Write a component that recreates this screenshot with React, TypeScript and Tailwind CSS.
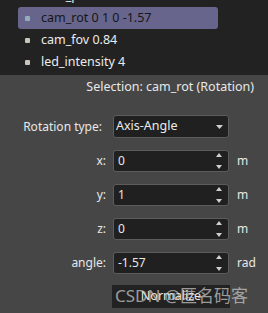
import React from 'react';

const font = { fontFamily: '"Noto Sans", "Noto Sans CJK SC", sans-serif' };

type Item = { name: string; active?: boolean };

const items: Item[] = [
  { name: 'cam_pos 0 0 5' },
  { name: 'cam_rot 0 1 0 -1.57', active: true },
  { name: 'cam_fov 0.84' },
  { name: 'led_intensity 4' },
];

function SpinBox({ value }: { value: string }) {
  return (
    <div className="relative flex h-[22px] w-[116px] items-center rounded-[3px] border border-[#5c5c5c] bg-[#202020] pl-[4px]">
      <span className="text-[12px] text-[#e8e8e8]">{value}</span>
      <div className="absolute right-[6px] top-[2px] flex h-[16px] flex-col justify-between text-[#d0d0d0]">
        <svg width="6" height="4" viewBox="0 0 6 4">
          <path d="M0 4 L3 0 L6 4 Z" fill="currentColor" />
        </svg>
        <svg width="6" height="4" viewBox="0 0 6 4">
          <path d="M0 0 L6 0 L3 4 Z" fill="currentColor" />
        </svg>
      </div>
    </div>
  );
}

function Row({ label, value, unit }: { label: string; value: string; unit: string }) {
  return (
    <div className="flex h-[22px] items-center">
      <span className="w-[106px] text-right text-[12px] text-[#e8e8e8]">{label}</span>
      <div className="ml-[7px]">
        <SpinBox value={value} />
      </div>
      <span className="ml-[8px] text-[12px] text-[#e8e8e8]">{unit}</span>
    </div>
  );
}

export default function App() {
  return (
    <div className="relative h-[313px] w-[268px] overflow-hidden bg-[#464646]" style={font}>
      {/* item list */}
      <div className="h-[75px] overflow-hidden bg-[#222222] pl-[18px]">
        <div className="-mt-[15px]">
          {items.map(it => (
            <div
              key={it.name}
              className={
                'flex h-[22px] w-[200px] items-center rounded-[3px] pl-[7px] ' +
                (it.active ? 'bg-[#67658c]' : '')
              }
            >
              <span
                className={
                  'h-[5px] w-[5px] rounded-[1px] ' + (it.active ? 'bg-[#93abbb]' : 'bg-[#c9c5ba]')
                }
              />
              <span
                className={
                  'ml-[11px] text-[12.5px] ' + (it.active ? 'text-[#161616]' : 'text-[#ececec]')
                }
              >
                {it.name}
              </span>
            </div>
          ))}
        </div>
      </div>

      {/* selection header */}
      <div className="flex h-[24px] items-center justify-end pr-[14px] text-[12.5px] text-[#e8e8e8]">
        Selection: cam_rot (Rotation)
      </div>

      {/* form */}
      <div className="mt-[16px] flex flex-col">
        <div className="flex h-[23px] items-center">
          <span className="w-[102px] text-right text-[12px] text-[#e8e8e8]">Rotation type:</span>
          <div className="relative ml-[11px] flex h-[23px] w-[116px] items-center rounded-[3px] border border-[#5c5c5c] bg-[#202020] pl-[2px]">
            <span className="text-[12.5px] text-[#ececec]">Axis-Angle</span>
            <svg className="absolute right-[5px] top-[9px]" width="7" height="4" viewBox="0 0 7 4">
              <path d="M0 0 L7 0 L3.5 4 Z" fill="#d0d0d0" />
            </svg>
          </div>
        </div>
        <div className="mt-[12px] flex flex-col gap-[12px]">
          <Row label="x:" value="0" unit="m" />
          <Row label="y:" value="1" unit="m" />
          <Row label="z:" value="0" unit="m" />
          <Row label="angle:" value="-1.57" unit="rad" />
        </div>
        <div className="ml-[112px] mt-[11px] flex h-[23px] w-[118px] items-center justify-center bg-[#222222] text-[12.5px] text-[#ececec]">
          Normalize
        </div>
      </div>

      {/* watermark */}
      <div className="absolute left-[115px] top-[283px] text-[17px] text-[#c4c4c4] opacity-75">
        CSDN @匿名码客
      </div>
    </div>
  );
}
